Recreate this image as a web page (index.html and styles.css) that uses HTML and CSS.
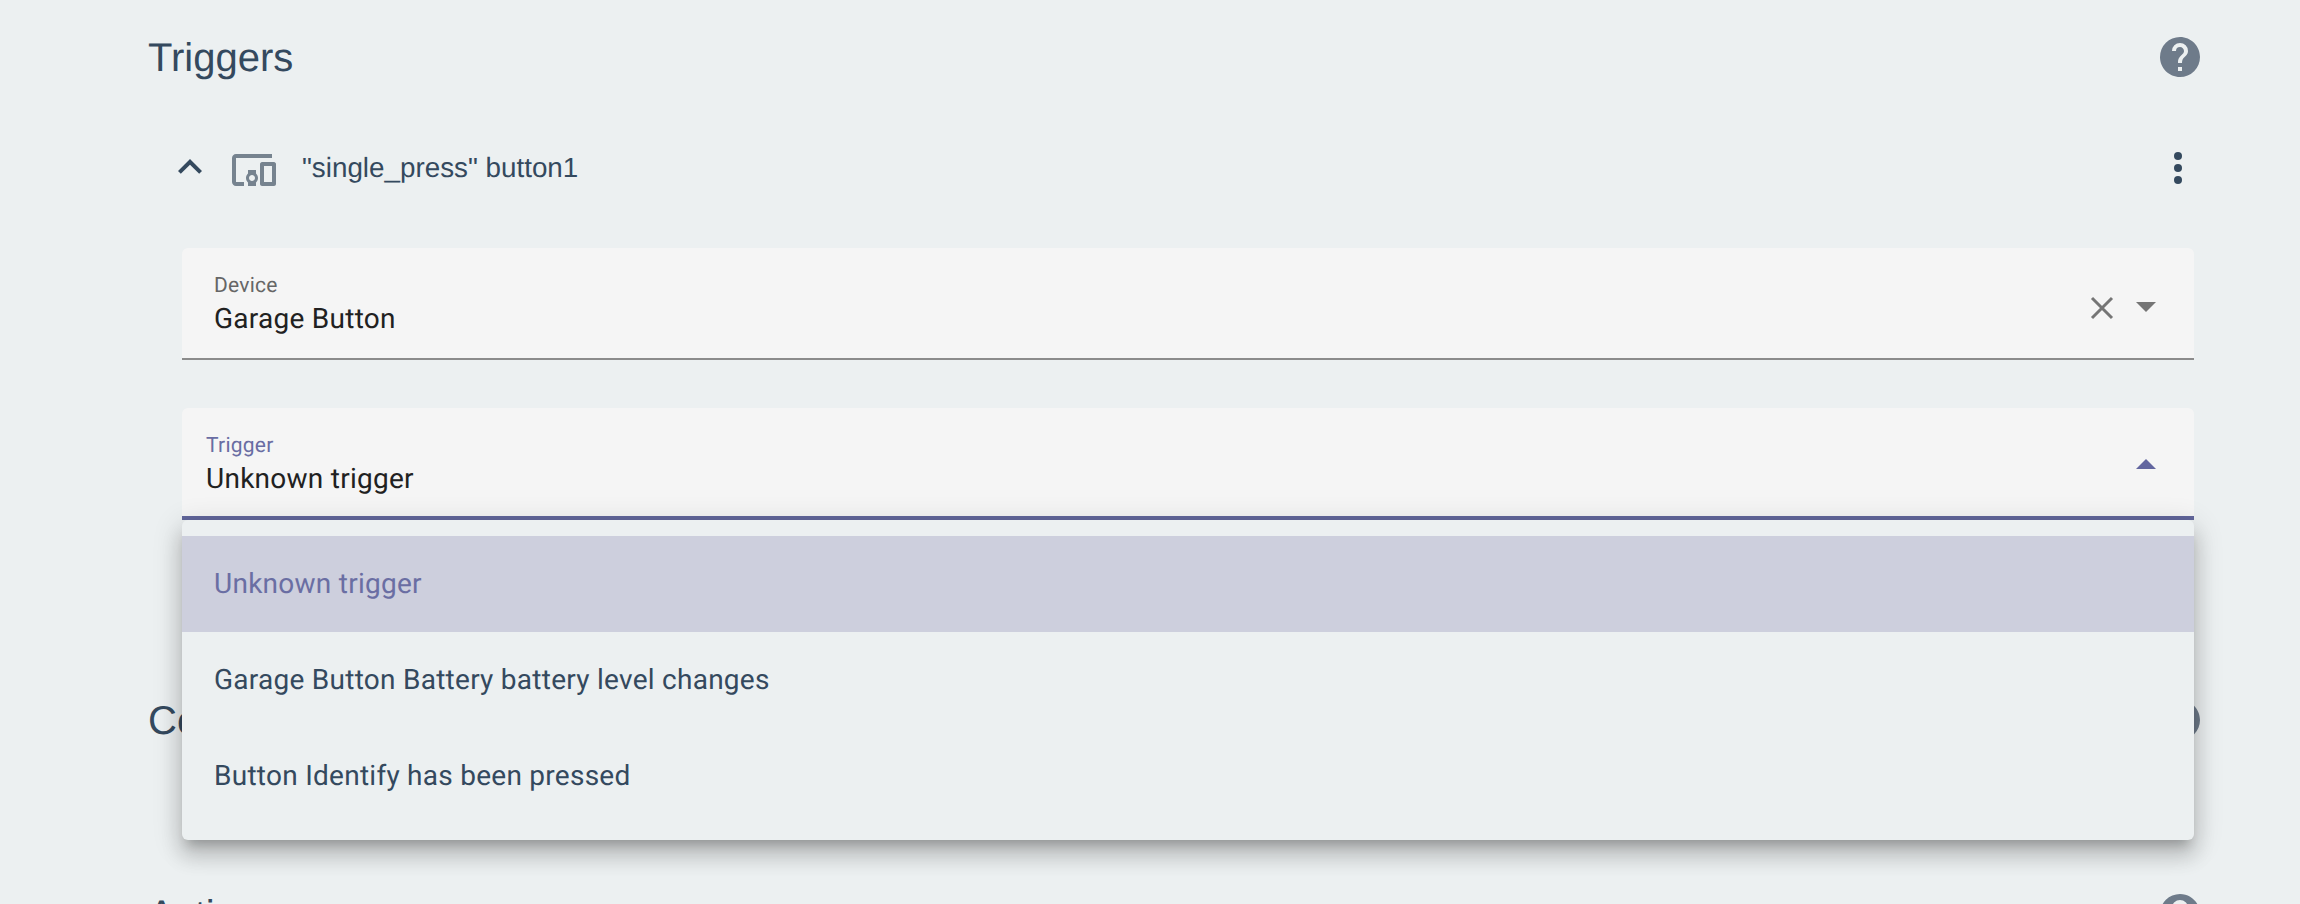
FILE: index.html
```html
<!DOCTYPE html>
<html lang="en">
<head>
<meta charset="utf-8">
<title>Triggers</title>
<link rel="stylesheet" href="styles.css">
</head>
<body>
<main class="page">
  <section class="section">
    <header class="section-header">
      <h2 class="section-title">Triggers</h2>
      <svg class="help-icon" viewBox="2 2 20 20"><path d="M15.07,11.25L14.17,12.17C13.45,12.89 13,13.5 13,15H11V14.5C11,13.39 11.45,12.39 12.17,11.67L13.41,10.41C13.78,10.05 14,9.55 14,9C14,7.89 13.1,7 12,7A2,2 0 0,0 10,9H8A4,4 0 0,1 12,5A4,4 0 0,1 16,9C16,9.88 15.64,10.67 15.07,11.25M13,19H11V17H13M12,2A10,10 0 0,0 2,12C2,17.5 6.5,22 12,22A10,10 0 0,0 22,12C22,6.47 17.5,2 12,2Z"/></svg>
    </header>
    <div class="row">
      <svg class="chevron-icon" viewBox="0 0 24 24"><path d="M7.41,15.41L12,10.83L16.59,15.41L18,14L12,8L6,14L7.41,15.41Z"/></svg>
      <svg class="devices-icon" viewBox="0 0 24 24"><path d="M3 6H21V4H3C1.9 4 1 4.9 1 6V18C1 19.1 1.9 20 3 20H7V18H3V6M13 12H9V13.78C8.39 14.33 8 15.11 8 16C8 16.89 8.39 17.67 9 18.22V20H13V18.22C13.61 17.67 14 16.88 14 16S13.61 14.33 13 13.78V12M11 17.5C10.17 17.5 9.5 16.83 9.5 16S10.17 14.5 11 14.5 12.5 15.17 12.5 16 11.83 17.5 11 17.5M22 8H16C15.5 8 15 8.5 15 9V19C15 19.5 15.5 20 16 20H22C22.5 20 23 19.5 23 19V9C23 8.5 22.5 8 22 8M21 18H17V10H21V18Z"/></svg>
      <span class="row-label">"single_press" button1</span>
      <svg class="dots-icon" viewBox="0 0 12 36"><circle cx="6" cy="6" r="4"/><circle cx="6" cy="18" r="4"/><circle cx="6" cy="30" r="4"/></svg>
    </div>
    <div class="fields">
      <div class="field field-device">
        <div class="field-text">
          <span class="field-label">Device</span>
          <span class="field-value">Garage Button</span>
        </div>
        <svg class="close-icon" viewBox="0 0 24 24"><path d="M2 2L22 22M22 2L2 22"/></svg>
        <span class="arrow-down"></span>
      </div>
      <div class="field field-open">
        <div class="field-text">
          <span class="field-label">Trigger</span>
          <span class="field-value">Unknown trigger</span>
        </div>
        <span class="arrow-up"></span>
        <ul class="menu">
          <li class="menu-item menu-item-selected">Unknown trigger</li>
          <li class="menu-item">Garage Button Battery battery level changes</li>
          <li class="menu-item">Button Identify has been pressed</li>
        </ul>
      </div>
    </div>
  </section>
  <section class="section section-conditions">
    <header class="section-header">
      <h2 class="section-title">Conditions</h2>
      <svg class="help-icon" viewBox="2 2 20 20"><path d="M15.07,11.25L14.17,12.17C13.45,12.89 13,13.5 13,15H11V14.5C11,13.39 11.45,12.39 12.17,11.67L13.41,10.41C13.78,10.05 14,9.55 14,9C14,7.89 13.1,7 12,7A2,2 0 0,0 10,9H8A4,4 0 0,1 12,5A4,4 0 0,1 16,9C16,9.88 15.64,10.67 15.07,11.25M13,19H11V17H13M12,2A10,10 0 0,0 2,12C2,17.5 6.5,22 12,22A10,10 0 0,0 22,12C22,6.47 17.5,2 12,2Z"/></svg>
    </header>
  </section>
  <section class="section section-actions">
    <header class="section-header">
      <h2 class="section-title">Actions</h2>
      <svg class="help-icon" viewBox="2 2 20 20"><path d="M15.07,11.25L14.17,12.17C13.45,12.89 13,13.5 13,15H11V14.5C11,13.39 11.45,12.39 12.17,11.67L13.41,10.41C13.78,10.05 14,9.55 14,9C14,7.89 13.1,7 12,7A2,2 0 0,0 10,9H8A4,4 0 0,1 12,5A4,4 0 0,1 16,9C16,9.88 15.64,10.67 15.07,11.25M13,19H11V17H13M12,2A10,10 0 0,0 2,12C2,17.5 6.5,22 12,22A10,10 0 0,0 22,12C22,6.47 17.5,2 12,2Z"/></svg>
    </header>
  </section>
</main>
</body>
</html>
```
FILE: styles.css
```css
* { box-sizing: border-box; }
html, body {
  margin: 0;
  height: 904px;
  overflow: hidden;
  background: #ecf0f1;
}
body {
  font-family: "Liberation Sans", Arial, sans-serif;
  color: #34495e;
  text-rendering: geometricPrecision;
}
.page { padding: 0 100px 0 148px; }

.section-header {
  display: flex;
  align-items: center;
  justify-content: space-between;
  height: 114px;
}
.section-title {
  margin: 2px 0 0;
  font-size: 40px;
  font-weight: 400;
  line-height: 48px;
  color: #34495e;
}
.help-icon { width: 40px; height: 40px; fill: #6e7b8a; display: block; }
.section-conditions { margin-top: 143px; }
.section-actions { margin-top: 80px; }

.row {
  display: flex;
  align-items: center;
  height: 48px;
  margin-top: 30px;
  padding-left: 18px;
}
.chevron-icon { width: 48px; height: 48px; fill: #34495e; flex: none; margin-top: -2px; }
.devices-icon { width: 48px; height: 48px; fill: #76838f; flex: none; margin: 4px 0 0 16px; }
.row-label { margin-left: 24px; font-size: 27.8px; line-height: 48px; color: #34495e; }
.dots-icon { width: 12px; height: 36px; fill: #34495e; margin-left: auto; margin-right: 16px; }

.fields {
  margin: 56px 6px 0 34px;
  display: flex;
  flex-direction: column;
  gap: 48px;
}
.field {
  position: relative;
  display: flex;
  align-items: center;
  height: 112px;
  background: #f5f5f5;
  border-radius: 6px 6px 0 0;
  font-family: Roboto, sans-serif;
}
.field-device { padding: 0 32px; border-bottom: 2px solid #8b8b8b; }
.field-open { padding: 0 24px; border-bottom: 4px solid #62669b; }
.field-text { display: flex; flex-direction: column; flex: 1; min-width: 0; }
.field-label {
  font-size: 21px;
  line-height: 24px;
  letter-spacing: 0.26px;
  color: #666666;
}
.field-value {
  margin-top: 3px;
  font-size: 28px;
  line-height: 36px;
  letter-spacing: 0.2625px;
  color: #212121;
}
.field-device .field-text { padding-top: 5px; }
.field-open .field-text { padding-top: 7px; }
.field-open .field-label { color: #696da3; }
.close-icon { width: 24px; height: 24px; stroke: #757575; stroke-width: 3; fill: none; flex: none; margin-right: 22px; margin-top: 10px; }
.arrow-down, .arrow-up {
  width: 0;
  height: 0;
  flex: none;
  border-left: 10px solid transparent;
  border-right: 10px solid transparent;
}
.arrow-down { border-top: 10px solid #757575; margin-right: 6px; margin-top: 8px; }
.arrow-up { border-bottom: 10px solid #62669f; margin-right: 14px; margin-top: 4px; }

.menu {
  position: absolute;
  top: 112px;
  left: 0;
  right: 0;
  margin: 0;
  padding: 16px 0;
  list-style: none;
  background: #ecf0f1;
  border-radius: 6px;
  box-shadow: 0 10px 10px -6px rgba(0,0,0,.2), 0 16px 20px 2px rgba(0,0,0,.14), 0 6px 28px 4px rgba(0,0,0,.12);
  z-index: 5;
}
.menu-item {
  display: flex;
  align-items: center;
  height: 96px;
  padding: 0 32px 2px;
  font-size: 28px;
  letter-spacing: 0.2625px;
  color: #34495e;
}
.menu-item-selected { background: #cdcfdd; color: #6a6ea3; }
```
